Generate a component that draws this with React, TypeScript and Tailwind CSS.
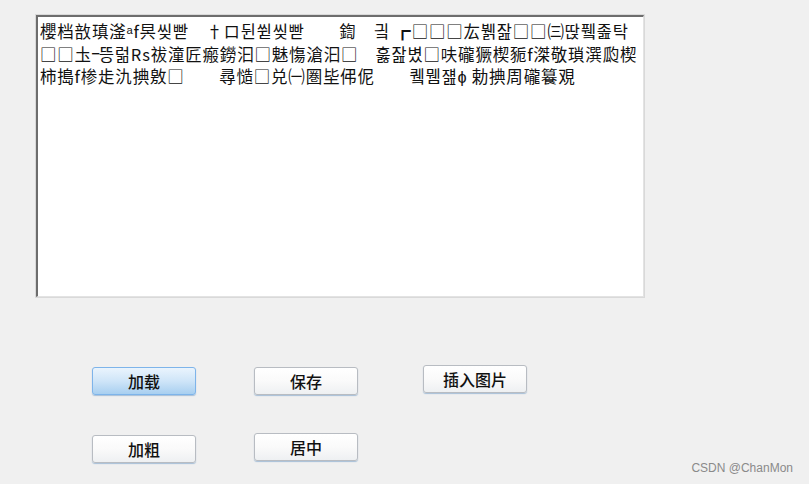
import React from 'react';

const lines = [
  '櫻档敨瑱滏ᵃf昗씾빧　†ロ뒨쒿씾빧　　鍧　긬 ┏□□□厷뷁잞□□㈢딵퓈졾탁',
  '□□圡᠆뜽럶Rs祓潼匠瘢鐒汩□魅慯滄汩□　훓잞볐□呋礲獗楔䝈f滐敬瑣潠瓝楔',
  '柿搗f椮歨氿捵敫□　　尋慥□兑㈠圏坒伄伲　　퀰뭼쟲ɸ 勅捵周礲籑覌',
];

const Btn = ({ label, active = false, className = '' }: { label: string; active?: boolean; className?: string }) => (
  <button
    className={
      'w-[104px] h-[28px] rounded-[3px] border text-[16px] font-medium text-[#111] shadow-[0_1px_1px_rgba(120,160,200,0.6)] ' +
      (active
        ? 'border-[#7eb4ea] bg-gradient-to-b from-[#eaf4fd] via-[#cfe5f8] to-[#a8cff0] '
        : 'border-[#b8bcc2] bg-gradient-to-b from-white via-[#fafafa] to-[#eef0f2] ') +
      className
    }
  >
    {label}
  </button>
);

export default function App() {
  return (
    <div
      className="w-[809px] h-[484px] bg-[#f0f0f0] relative overflow-hidden"
      style={{ fontFamily: '"Noto Sans CJK SC", "Noto Sans CJK KR", sans-serif' }}
    >
      <div className="pt-[14px] pl-[35px]">
        <div className="w-[610px] h-[284px] border border-[#d9d9d9] bg-white">
          <div className="w-full h-full border-l-2 border-t-2 border-l-[#6d6d6d] border-t-[#6d6d6d] border-r border-b border-r-[#e3e3e3] border-b-[#e3e3e3] px-[2px] pt-[3px] overflow-hidden">
            {lines.map((l, i) => (
              <div key={i} className="whitespace-pre text-[16.5px] leading-[22.5px] tracking-[0.8px] text-[#111]">
                {l}
              </div>
            ))}
          </div>
        </div>
      </div>

      <div className="flex items-start pl-[92px] mt-[69px]">
        <Btn label="加载" active />
        <Btn label="保存" className="ml-[58px]" />
        <Btn label="插入图片" className="ml-[65px] -mt-[2px]" />
      </div>
      <div className="flex items-start pl-[92px] mt-[40px]">
        <Btn label="加粗" />
        <Btn label="居中" className="ml-[58px] -mt-[2px]" />
      </div>

      <div
        className="absolute right-[16px] bottom-[7px] text-[12px] text-[#8a8a8a]"
        style={{ fontFamily: '"Liberation Sans", Arial, sans-serif' }}
      >
        CSDN @ChanMon
      </div>
    </div>
  );
}
